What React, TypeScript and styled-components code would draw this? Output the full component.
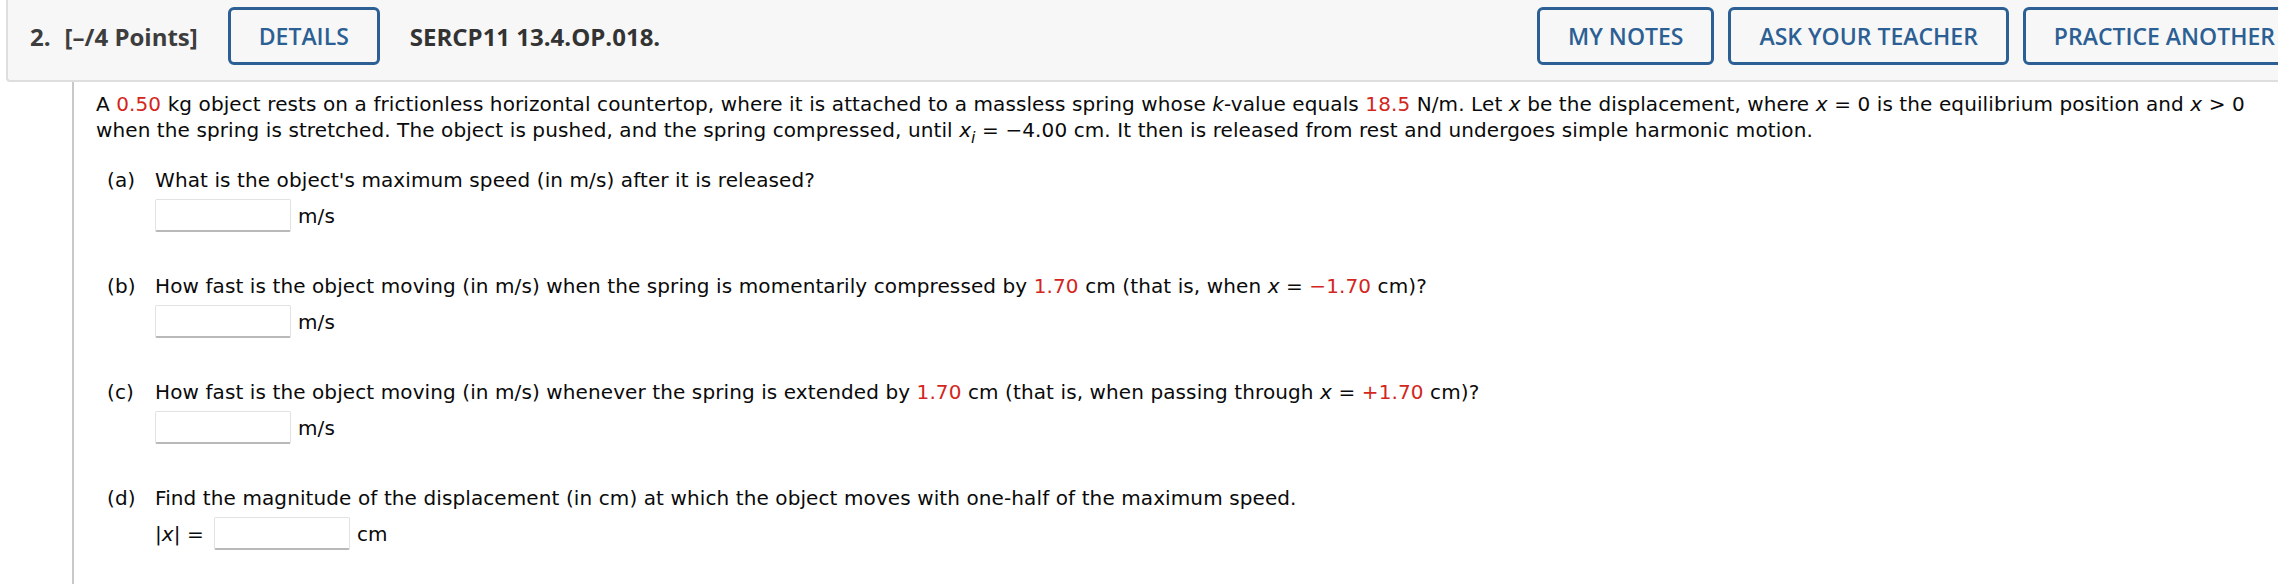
import type { FC, ReactNode } from 'react';
import styled, { createGlobalStyle } from 'styled-components';

const GlobalStyle = createGlobalStyle`
  html, body {
    margin: 0;
    padding: 0;
    background: #ffffff;
    overflow: hidden;
  }
`;

const Page = styled.div`
  width: 2278px;
  min-height: 584px;
  overflow: hidden;
  background: #ffffff;
`;

const Header = styled.header`
  display: flex;
  align-items: center;
  box-sizing: border-box;
  width: 2322px;
  height: 82px;
  margin-left: 6px;
  padding: 7px 22px 15px;
  background: #f7f7f7;
  border-left: 2px solid #dedede;
  border-bottom: 2px solid #dedede;
  border-bottom-left-radius: 4px;
  font-family: 'Open Sans', 'Liberation Sans', sans-serif;
`;

const QuestionNumber = styled.span`
  font-size: 24px;
  font-weight: 700;
  color: #3d3d3d;
  margin-right: 14px;
`;

const Points = styled.span`
  font-size: 24px;
  font-weight: 700;
  color: #3d3d3d;
`;

const OutlineButton = styled.button<{ $offset?: number }>`
  height: 58px;
  box-sizing: border-box;
  margin-left: ${p => p.$offset ?? 0}px;
  padding: 0 28px;
  border: 3px solid #2c5f94;
  border-radius: 6px;
  background: transparent;
  color: #2c5f94;
  font-family: 'Open Sans', 'Liberation Sans', sans-serif;
  font-size: 23px;
  font-weight: 600;
  white-space: nowrap;
  cursor: pointer;
`;

const QuestionCode = styled.span`
  margin-left: 30px;
  font-size: 24px;
  font-weight: 700;
  color: #333333;
`;

const HeaderActions = styled.div`
  display: flex;
  gap: 14px;
  margin-left: auto;
`;

const Content = styled.section`
  box-sizing: border-box;
  margin-left: 72px;
  min-height: 502px;
  padding: 9px 0 0 22px;
  border-left: 2px solid #c8c8c8;
  font-family: Verdana, 'DejaVu Sans', sans-serif;
  font-size: 20px;
  letter-spacing: 0.1px;
  line-height: 26px;
  color: #0a0a0a;
`;

const Intro = styled.p`
  margin: 0;
  white-space: nowrap;
`;

const Given = styled.span`
  color: #d3261c;
`;

const Var = styled.i`
  font-style: italic;
`;

const Sub = styled.span`
  position: relative;
  top: 6px;
  font-size: 16px;
  font-style: italic;
  line-height: 0;
`;

const Parts = styled.ol`
  list-style: none;
  margin: 24px 0 0;
  padding: 0 0 0 11px;
`;

const Part = styled.li`
  margin-bottom: 41px;
`;

const PartQuestion = styled.div`
  display: flex;
  white-space: nowrap;
`;

const PartLabel = styled.span`
  flex: 0 0 48px;
`;

const AnswerRow = styled.div`
  display: flex;
  align-items: center;
  gap: 7px;
  height: 33px;
  margin-top: 6px;
  padding-left: 48px;
`;

const Prefix = styled.span`
  margin-right: 3px;
`;

const AnswerInput = styled.input`
  box-sizing: border-box;
  width: 136px;
  height: 33px;
  margin: 0;
  border: 1px solid #e2e2e2;
  border-bottom: 2px solid #b9b9b9;
  border-radius: 2px;
  background: #ffffff;
  font: inherit;
`;

type PartProps = { label: string; unit: string; prefix?: ReactNode; children: ReactNode };

const QuestionPart: FC<PartProps> = ({ label, unit, prefix, children }) => (
  <Part>
    <PartQuestion>
      <PartLabel>({label})</PartLabel>
      <span>{children}</span>
    </PartQuestion>
    <AnswerRow>
      {prefix && <Prefix>{prefix}</Prefix>}
      <AnswerInput type="text" aria-label={`answer ${label}`} />
      <span>{unit}</span>
    </AnswerRow>
  </Part>
);

const App: FC = () => {
  return (
    <Page>
      <GlobalStyle />
      <Header>
        <QuestionNumber>2.</QuestionNumber>
        <Points>[–/4 Points]</Points>
        <OutlineButton $offset={30}>DETAILS</OutlineButton>
        <QuestionCode>SERCP11 13.4.OP.018.</QuestionCode>
        <HeaderActions>
          <OutlineButton>MY NOTES</OutlineButton>
          <OutlineButton>ASK YOUR TEACHER</OutlineButton>
          <OutlineButton>PRACTICE ANOTHER</OutlineButton>
        </HeaderActions>
      </Header>

      <Content>
        <Intro>
          A <Given>0.50</Given> kg object rests on a frictionless horizontal countertop, where it is attached to a
          massless spring whose <Var>k</Var>-value equals <Given>18.5</Given> N/m. Let <Var>x</Var> be the
          displacement, where <Var>x</Var> = 0 is the equilibrium position and <Var>x</Var> &gt; 0
          <br />
          when the spring is stretched. The object is pushed, and the spring compressed, until <Var>x</Var>
          <Sub>i</Sub> = −4.00 cm. It then is released from rest and undergoes simple harmonic motion.
        </Intro>

        <Parts>
          <QuestionPart label="a" unit="m/s">
            What is the object's maximum speed (in m/s) after it is released?
          </QuestionPart>
          <QuestionPart label="b" unit="m/s">
            How fast is the object moving (in m/s) when the spring is momentarily compressed by{' '}
            <Given>1.70</Given> cm (that is, when <Var>x</Var> = <Given>−1.70</Given> cm)?
          </QuestionPart>
          <QuestionPart label="c" unit="m/s">
            How fast is the object moving (in m/s) whenever the spring is extended by <Given>1.70</Given> cm
            (that is, when passing through <Var>x</Var> = <Given>+1.70</Given> cm)?
          </QuestionPart>
          <QuestionPart
            label="d"
            unit="cm"
            prefix={
              <>
                |<Var>x</Var>| =
              </>
            }
          >
            Find the magnitude of the displacement (in cm) at which the object moves with one-half of the
            maximum speed.
          </QuestionPart>
        </Parts>
      </Content>
    </Page>
  );
};

export default App;
